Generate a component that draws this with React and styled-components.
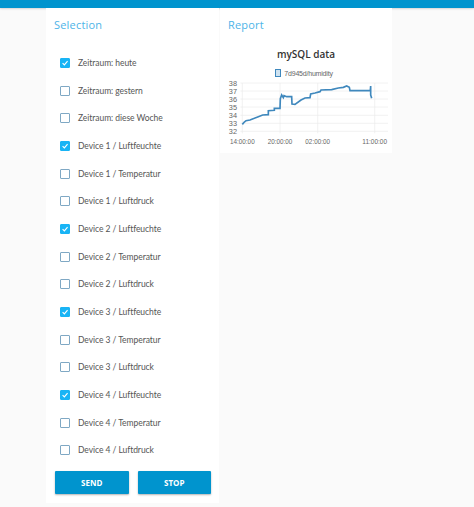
import React from "react";
import styled, { createGlobalStyle } from "styled-components";

const GlobalStyle = createGlobalStyle`
  html, body {
    margin: 0;
    padding: 0;
    background: #fafafa;
  }
  body {
    font-family: "Open Sans", "Noto Sans", sans-serif;
  }
`;

const options = [
  { label: "Zeitraum: heute", checked: true },
  { label: "Zeitraum: gestern" },
  { label: "Zeitraum: diese Woche" },
  { label: "Device 1 / Luftfeuchte", checked: true },
  { label: "Device 1 / Temperatur" },
  { label: "Device 1 / Luftdruck" },
  { label: "Device 2 / Luftfeuchte", checked: true },
  { label: "Device 2 / Temperatur" },
  { label: "Device 2 / Luftdruck" },
  { label: "Device 3 / Luftfeuchte", checked: true },
  { label: "Device 3 / Temperatur" },
  { label: "Device 3 / Luftdruck" },
  { label: "Device 4 / Luftfeuchte", checked: true },
  { label: "Device 4 / Temperatur" },
  { label: "Device 4 / Luftdruck" },
];

// chart is drawn in 3x units so the numbers stay whole
const yTicks = [
  { label: "38", y: 249 },
  { label: "37", y: 273 },
  { label: "36", y: 297 },
  { label: "35", y: 321 },
  { label: "34", y: 346 },
  { label: "33", y: 370 },
  { label: "32", y: 394 },
];
const xTicks = [
  { label: "14:00:00", x: 82 },
  { label: "20:00:00", x: 195 },
  { label: "02:00:00", x: 308 },
  { label: "11:00:00", x: 479 },
];
const linePoints =
  "82,373 88,366 93,362 105,360 118,355 130,350 143,345 160,344 160,332 178,331 178,325 195,325 196,296 200,285 205,293 207,287 215,290 230,290 231,312 240,313 258,300 270,294 285,293 287,282 300,279 315,275 318,270 350,269 370,264 385,262 395,258 403,262 405,272 466,272 467,258 467,285 470,295";

const Check = () => (
  <svg width="8" height="8" viewBox="0 0 10 10">
    <path d="M2 5.2 L4.2 7.4 L8.2 2.8" fill="none" stroke="#fff" strokeWidth="1.4" />
  </svg>
);

const App = () => (
  <>
    <GlobalStyle />
    <TopBar />
    <Columns>
      <SelectionCard>
        <CardTitle>Selection</CardTitle>
        <OptionList>
          {options.map((option) => (
            <OptionRow key={option.label}>
              <CheckBox $checked={option.checked}>{option.checked && <Check />}</CheckBox>
              <OptionLabel>{option.label}</OptionLabel>
            </OptionRow>
          ))}
        </OptionList>
        <ButtonRow>
          <ActionButton>SEND</ActionButton>
          <ActionButton>STOP</ActionButton>
        </ButtonRow>
      </SelectionCard>
      <ReportCard>
        <CardTitle>Report</CardTitle>
        <ChartTitle>mySQL data</ChartTitle>
        <Legend>
          <LegendSwatch />
          <LegendText>7d945d/humidity</LegendText>
        </Legend>
        <ChartSvg viewBox="15 237 516 210">
          {yTicks.map((tick) => (
            <g key={tick.label}>
              <line x1="76" x2="519" y1={tick.y} y2={tick.y} stroke="#ececec" strokeWidth="2" />
              <text
                x="66"
                y={tick.y + 8}
                fontSize="22"
                fill="#666"
                textAnchor="end"
                fontFamily="Liberation Sans"
              >
                {tick.label}
              </text>
            </g>
          ))}
          {xTicks.map((tick) => (
            <g key={tick.label}>
              <line x1={tick.x} x2={tick.x} y1="249" y2="400" stroke="#ececec" strokeWidth="2" />
              <text
                x={tick.x}
                y="431"
                fontSize="22"
                fill="#666"
                textAnchor="middle"
                textLength="74"
                lengthAdjust="spacingAndGlyphs"
                fontFamily="Liberation Sans"
              >
                {tick.label}
              </text>
            </g>
          ))}
          <polyline points={linePoints} fill="none" stroke="#3f88bd" strokeWidth="5" />
        </ChartSvg>
      </ReportCard>
    </Columns>
  </>
);

const TopBar = styled.div`
  height: 8px;
  background: #0094ce;
  box-shadow: 0 1px 2px rgba(0, 0, 0, 0.15);
`;

const Columns = styled.div`
  display: flex;
  align-items: flex-start;
  gap: 1px;
  padding-left: 46px;
`;

const Card = styled.div`
  background: #fff;
  width: 173px;
  box-sizing: border-box;
`;

const SelectionCard = styled(Card)`
  height: 495px;
  padding: 9px 8px 0 8px;
`;

const ReportCard = styled(Card)`
  width: 172px;
  height: 145px;
  padding-top: 9px;
`;

const CardTitle = styled.div`
  font-size: 11px;
  line-height: 15px;
  color: #4db4e8;
  letter-spacing: 0.2px;
  ${ReportCard} & {
    padding-left: 8px;
  }
`;

const OptionList = styled.div`
  display: flex;
  flex-direction: column;
  margin-top: 17px;
`;

const OptionRow = styled.div`
  display: flex;
  align-items: center;
  height: 27.7px;
  padding-left: 6px;
`;

const CheckBox = styled.span`
  display: flex;
  align-items: center;
  justify-content: center;
  width: 10px;
  height: 10px;
  box-sizing: border-box;
  border-radius: 1px;
  border: 1px solid ${(p) => (p.$checked ? "#19b4f5" : "#7fa8c4")};
  background: ${(p) => (p.$checked ? "#19b4f5" : "#fff")};
`;

const OptionLabel = styled.span`
  margin-left: 8px;
  font-family: Lato, sans-serif;
  font-size: 8.5px;
  letter-spacing: -0.05px;
  color: #555;
  white-space: nowrap;
`;

const ButtonRow = styled.div`
  display: flex;
  gap: 9px;
  margin: 7px 0 0 1px;
`;

const ActionButton = styled.button`
  width: 73.5px;
  height: 23px;
  padding: 0;
  border: none;
  border-radius: 1px;
  background: #0094ce;
  color: #fff;
  font-family: inherit;
  font-size: 8px;
  font-weight: 700;
  box-shadow: 0 1px 2px rgba(0, 0, 0, 0.3);
`;

const ChartTitle = styled.div`
  margin-top: 15px;
  text-align: center;
  font-size: 10px;
  line-height: 14px;
  font-weight: 600;
  color: #333;
`;

const Legend = styled.div`
  display: flex;
  align-items: center;
  justify-content: center;
  gap: 3px;
  margin-top: 7px;
  padding-right: 4px;
  height: 10px;
`;

const LegendSwatch = styled.span`
  width: 6px;
  height: 8px;
  box-sizing: border-box;
  border: 1.5px solid #3f88bd;
  background: #cfe3f1;
`;

const LegendText = styled.span`
  font-family: "Liberation Sans", sans-serif;
  font-size: 7px;
  letter-spacing: -0.2px;
  color: #666;
`;

const ChartSvg = styled.svg`
  display: block;
  width: 172px;
  height: 70px;
  margin-top: 1px;
`;

export default App;
